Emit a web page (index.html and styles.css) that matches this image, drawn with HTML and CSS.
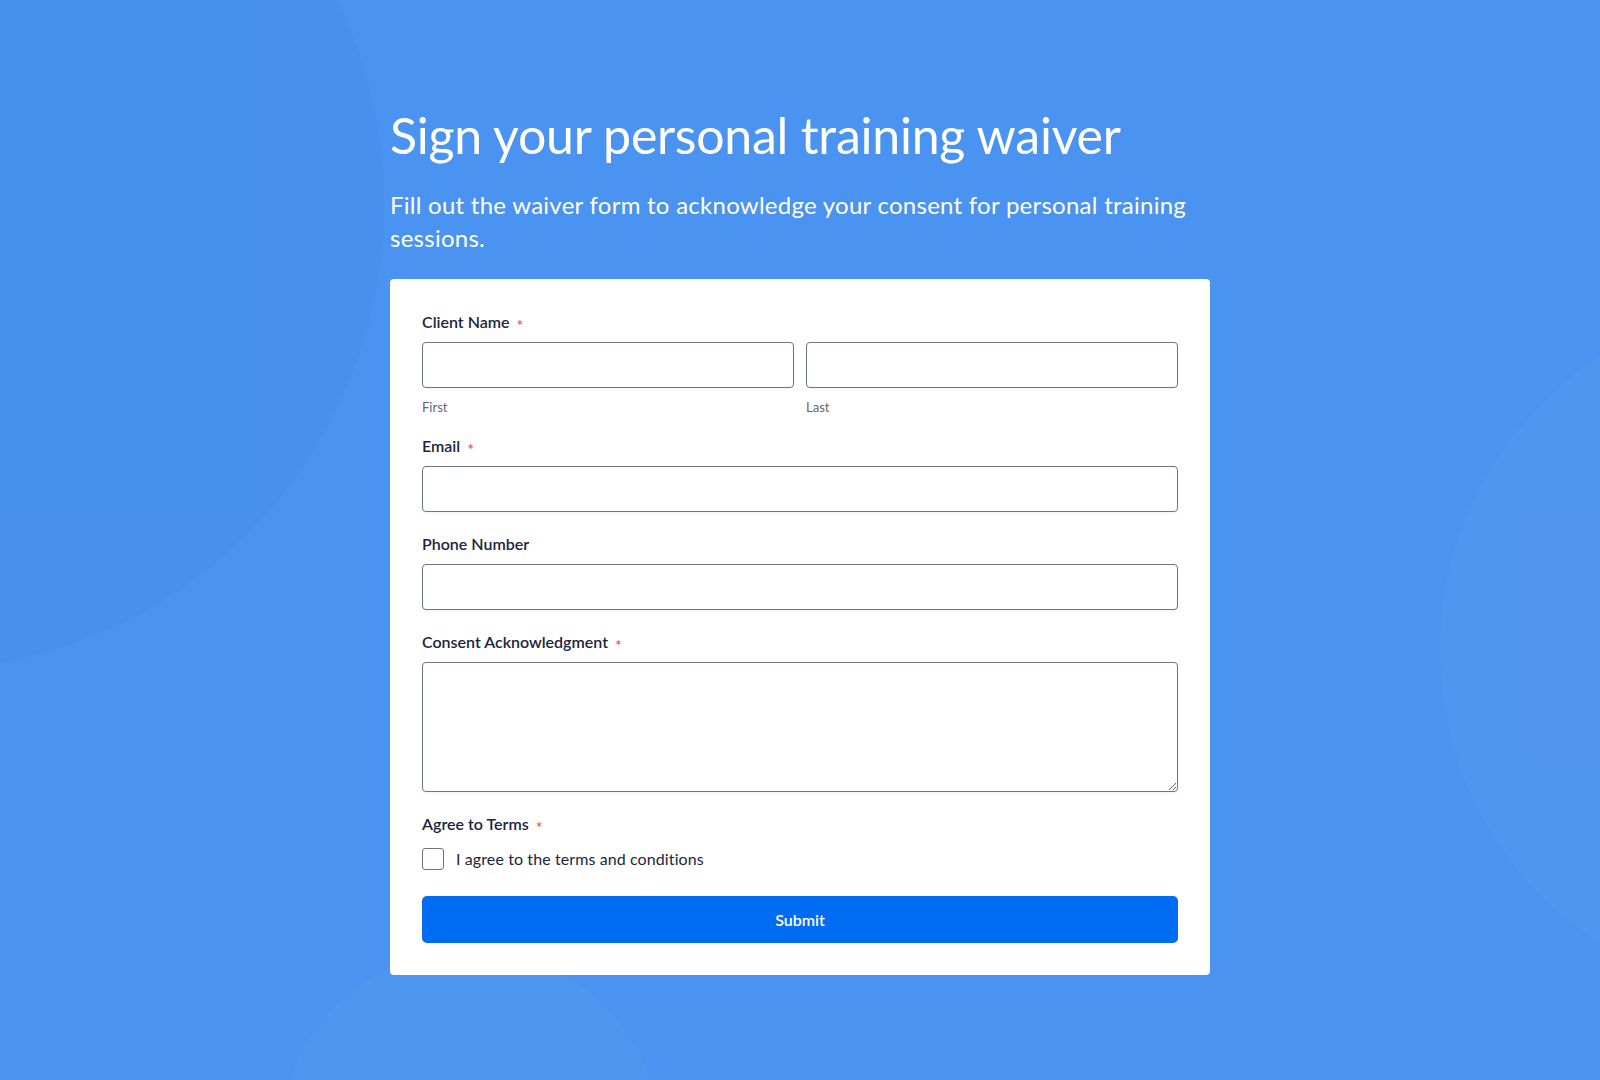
FILE: index.html
```html
<!DOCTYPE html>
<html lang="en">
<head>
<meta charset="utf-8">
<title>Sign your personal training waiver</title>
<link rel="stylesheet" href="styles.css">
</head>
<body>
<div class="bg">
  <div class="blob blob-a"></div>
  <div class="blob blob-b"></div>
  <div class="blob blob-c"></div>
</div>
<main class="page">
  <header class="intro">
    <h1 class="title">Sign your personal training waiver</h1>
    <p class="subtitle">Fill out the waiver form to acknowledge your consent for personal training sessions.</p>
  </header>
  <form class="card">
    <div class="field field-name">
      <div class="label">Client Name <span class="req">*</span></div>
      <div class="name-row">
        <div class="name-col">
          <input class="input" type="text">
          <div class="sub">First</div>
        </div>
        <div class="name-col">
          <input class="input" type="text">
          <div class="sub">Last</div>
        </div>
      </div>
    </div>
    <div class="field">
      <div class="label">Email <span class="req">*</span></div>
      <input class="input" type="email">
    </div>
    <div class="field">
      <div class="label">Phone Number</div>
      <input class="input" type="tel">
    </div>
    <div class="field">
      <div class="label">Consent Acknowledgment <span class="req">*</span></div>
      <textarea class="input textarea"></textarea>
    </div>
    <div class="field field-last">
      <div class="label">Agree to Terms <span class="req">*</span></div>
      <label class="check-row"><span class="box"></span><span class="check-text">I agree to the terms and conditions</span></label>
    </div>
    <button class="submit" type="button">Submit</button>
  </form>
</main>
</body>
</html>
```
FILE: styles.css
```css
* { box-sizing: border-box; }
html, body { margin: 0; padding: 0; }
body {
  width: 1600px;
  height: 1080px;
  overflow: hidden;
  background: #4a93f0;
  font-family: Lato, "Noto Sans", sans-serif;
  position: relative;
}
.bg { position: absolute; inset: 0; overflow: hidden; }
.blob { position: absolute; border-radius: 50%; }
.blob-a {
  left: -548px; top: -262px; width: 932px; height: 932px;
  background: rgba(40, 120, 220, 0.08);
}
.blob-b {
  left: 1440px; top: 300px; width: 700px; height: 700px;
  background: rgba(255, 255, 255, 0.03);
}
.blob-c {
  left: 280px; top: 950px; width: 380px; height: 380px;
  background: rgba(255, 255, 255, 0.025);
}
.page {
  position: relative;
  width: 820px;
  margin: 0 auto;
  padding-top: 103px;
}
.title {
  margin: 0;
  color: #fff;
  font-weight: 400;
  font-size: 50px;
  line-height: 64px;
  letter-spacing: -0.25px;
}
.subtitle {
  margin: 21px 0 0;
  color: #fff;
  font-size: 24px;
  line-height: 33px;
  letter-spacing: 0.26px;
  width: 810px;
}
.card {
  margin-top: 25px;
  background: #fff;
  border-radius: 4px;
  padding: 32px;
  display: flex;
  flex-direction: column;
}
.field { display: flex; flex-direction: column; margin-bottom: 21px; }
.field-name { margin-bottom: 23px; }
.field-last { margin-bottom: 22px; }
.label {
  color: #1a2540;
  font-size: 16px;
  font-weight: 600;
  line-height: 22px;
  margin-bottom: 9px;
}
.req {
  color: #e0432f;
  font-size: 16px;
  line-height: 0;
  margin-left: 3px;
  vertical-align: -3px;
  font-weight: 400;
}
.name-row { display: flex; gap: 12px; }
.name-col { flex: 1; display: flex; flex-direction: column; }
.input {
  display: block;
  width: 100%;
  height: 46px;
  border: 1px solid #6b7386;
  border-radius: 4px;
  background: #fff;
  font: inherit;
  box-shadow: 0 2px 3px rgba(0, 0, 0, 0.04);
}
.textarea { height: 130px; resize: vertical; }
.sub {
  color: #5f6777;
  font-size: 13px;
  line-height: 16px;
  margin-top: 11px;
  margin-bottom: -3px;
}
.check-row { display: flex; align-items: center; gap: 12px; margin-top: 4px; margin-bottom: 4px; }
.box {
  width: 22px; height: 22px;
  border: 1px solid #6b7386;
  border-radius: 3px;
  background: #fff;
}
.check-text { color: #1a2540; font-size: 16px; line-height: 22px; letter-spacing: 0.1px; }
.submit {
  height: 47px;
  border: 0;
  border-radius: 5px;
  background: #006cf4;
  color: #fff;
  font-family: inherit;
  font-size: 16px;
  font-weight: 600;
  margin-top: 0;
}
```
